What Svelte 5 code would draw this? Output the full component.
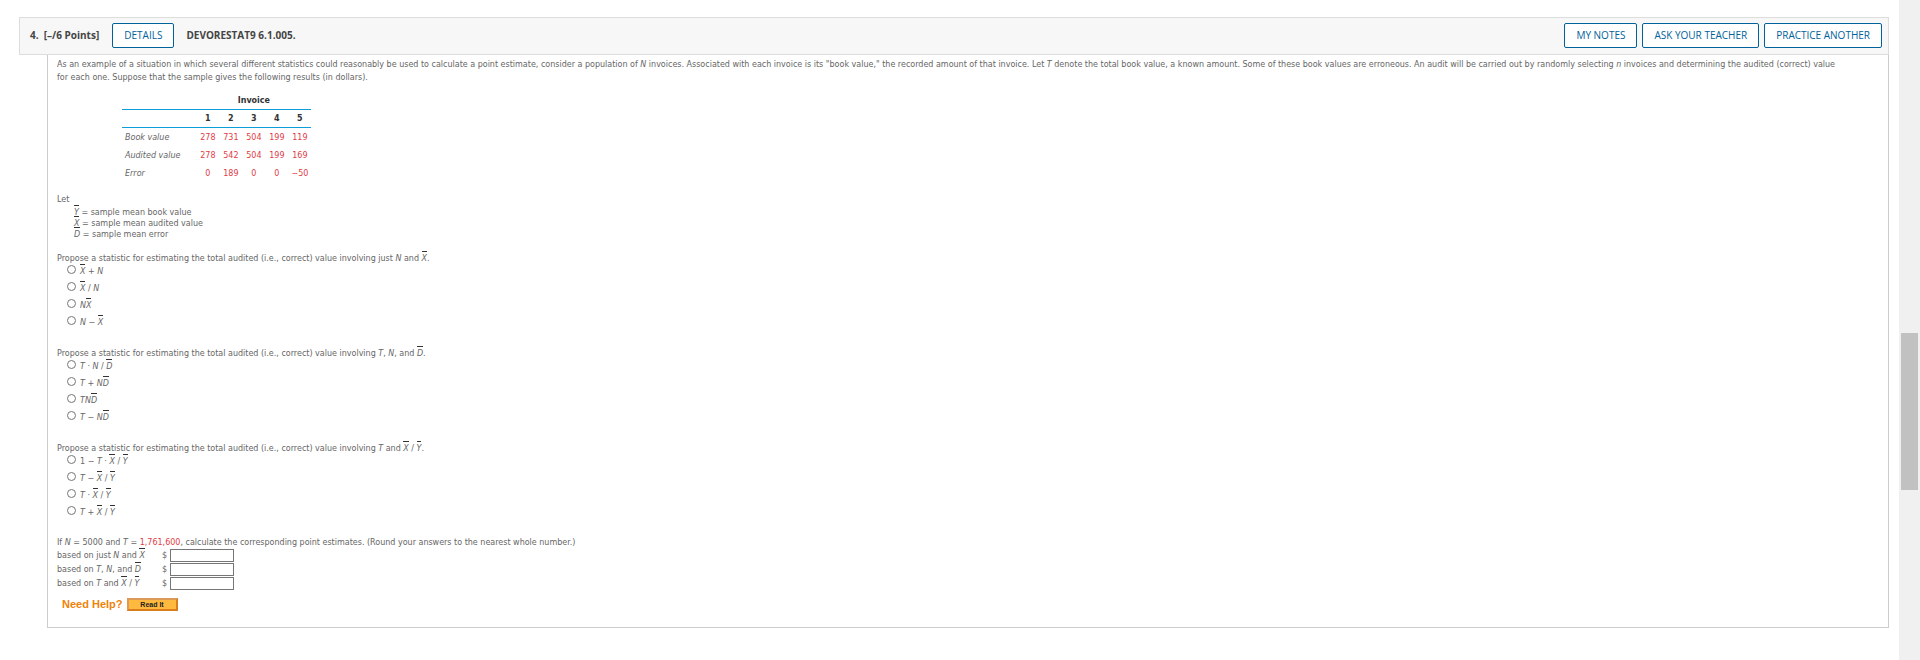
<script>
  const invoices = [1, 2, 3, 4, 5];

  const rows = [
    { label: "Book value", values: ["278", "731", "504", "199", "119"] },
    { label: "Audited value", values: ["278", "542", "504", "199", "169"] },
    { label: "Error", values: ["0", "189", "0", "0", "−50"] },
  ];

  const means = [
    { symbol: "^Y", text: "sample mean book value" },
    { symbol: "^X", text: "sample mean audited value" },
    { symbol: "^D", text: "sample mean error" },
  ];

  // In a formula, ^ marks the letter after it as a mean (drawn with a bar)
  const questions = [
    {
      name: "just-n-x",
      involving: "just N and ^X",
      options: ["^X + N", "^X / N", "N^X", "N − ^X"],
    },
    {
      name: "t-n-d",
      involving: "T, N, and ^D",
      options: ["T · N / ^D", "T + N^D", "TN^D", "T − N^D"],
    },
    {
      name: "t-x-y",
      involving: "T and ^X / ^Y",
      options: ["1 − T · ^X / ^Y", "T − ^X / ^Y", "T · ^X / ^Y", "T + ^X / ^Y"],
    },
  ];

  const estimates = [
    { id: "estimate-x", basis: "just N and ^X" },
    { id: "estimate-d", basis: "T, N, and ^D" },
    { id: "estimate-ratio", basis: "T and ^X / ^Y" },
  ];

  let selected = $state({});
  let answers = $state({});

  function parse(formula) {
    return formula.split(/(\^?[A-Z])/).filter(Boolean);
  }
</script>

{#snippet math(formula)}
  {#each parse(formula) as part}{#if part[0] === "^"}<i class="mean">{part[1]}</i
      >{:else if /[A-Z]/.test(part)}<i>{part}</i>{:else}{part}{/if}{/each}
{/snippet}

<div class="page">
  <main>
    <header>
      <h2>4.&nbsp; [–/6 Points]</h2>
      <button class="outline">DETAILS</button>
      <h2 class="code">DEVORESTAT9 6.1.005.</h2>
      <div class="actions">
        <button class="outline">MY NOTES</button>
        <button class="outline">ASK YOUR TEACHER</button>
        <button class="outline">PRACTICE ANOTHER</button>
      </div>
    </header>

    <section class="question">
      <p class="intro">
        As an example of a situation in which several different statistics could
        reasonably be used to calculate a point estimate, consider a population
        of <i>N</i> invoices. Associated with each invoice is its "book value,"
        the recorded amount of that invoice. Let <i>T</i> denote the total book
        value, a known amount. Some of these book values are erroneous. An audit
        will be carried out by randomly selecting <i>n</i> invoices and
        determining the audited (correct) value for each one. Suppose that the
        sample gives the following results (in dollars).
      </p>

      <table>
        <thead>
          <tr>
            <td></td>
            <th colspan="5" scope="colgroup">Invoice</th>
          </tr>
          <tr class="numbers">
            <td></td>
            {#each invoices as n}
              <th scope="col">{n}</th>
            {/each}
          </tr>
        </thead>
        <tbody>
          {#each rows as row}
            <tr>
              <th scope="row">{row.label}</th>
              {#each row.values as value}
                <td>{value}</td>
              {/each}
            </tr>
          {/each}
        </tbody>
      </table>

      <p>Let</p>
      <ul class="means">
        {#each means as mean}
          <li>{@render math(mean.symbol)} = {mean.text}</li>
        {/each}
      </ul>

      {#each questions as question}
        <fieldset>
          <legend>
            Propose a statistic for estimating the total audited (i.e., correct)
            value involving {@render math(question.involving)}.
          </legend>
          {#each question.options as option}
            <label class="option">
              <input
                type="radio"
                name={question.name}
                value={option}
                bind:group={selected[question.name]}
              />
              <span>{@render math(option)}</span>
            </label>
          {/each}
        </fieldset>
      {/each}

      <p>
        If <i>N</i> = 5000 and <i>T</i> = <span class="value">1,761,600</span>,
        calculate the corresponding point estimates. (Round your answers to the
        nearest whole number.)
      </p>
      <div class="estimates">
        {#each estimates as { id, basis }}
          <label for={id}>based on {@render math(basis)}</label>
          <span>$</span>
          <input {id} type="text" bind:value={answers[id]} />
        {/each}
      </div>

      <div class="help">
        <strong>Need Help?</strong>
        <button class="read">Read It</button>
      </div>
    </section>
  </main>

  <div class="scrollbar">
    <div class="thumb"></div>
  </div>
</div>

<style>
  :global(body) {
    margin: 0;
    background: #fff;
  }

  .page {
    display: flex;
    min-height: 100vh;
    font-family: Verdana, "DejaVu Sans", sans-serif;
    font-size: 8px;
    line-height: 13px;
    color: #666;
  }

  main {
    flex: 1;
    padding: 17px 10px 30px 19px;
  }

  header {
    display: flex;
    align-items: center;
    padding: 5px 6px 6px 10px;
    border: 1px solid #ddd;
    background: #f7f7f7;
    font-family: "Open Sans", sans-serif;
  }

  h2 {
    margin: 0 13px 0 0;
    font-size: 10px;
    font-weight: 700;
    color: #444;
  }

  .code {
    margin-left: 12px;
  }

  .actions {
    display: flex;
    gap: 5px;
    margin-left: auto;
  }

  .outline {
    height: 25px;
    padding: 0 11px 1px;
    border: 1px solid #00629b;
    border-radius: 2px;
    background: #fff;
    font-family: inherit;
    font-size: 10px;
    font-weight: 500;
    color: #00629b;
    cursor: pointer;
  }

  .question {
    margin-left: 28px;
    padding: 3px 9px 16px;
    border: 1px solid #ccc;
    border-top: 0;
  }

  p {
    margin: 0;
  }

  .intro {
    padding-right: 36px;
  }

  table {
    margin: 8px 0 11px 65px;
    border-collapse: collapse;
    text-align: center;
  }

  th,
  td {
    min-width: 17px;
    height: 17px;
    padding: 0 3px;
  }

  thead th {
    color: #333;
  }

  .numbers {
    border-top: 1px solid #0a9fd9;
    border-bottom: 1px solid #0a9fd9;
  }

  tbody th,
  tbody td {
    height: 18px;
  }

  tbody th {
    padding-right: 16px;
    font-style: italic;
    font-weight: 400;
    text-align: left;
  }

  tbody td,
  .value {
    color: #e03c46;
  }

  .mean {
    padding-top: 2px;
    border-top: 1px solid #333;
  }

  .means {
    margin: 1px 0 12px;
    padding: 0 0 0 17px;
    line-height: 11px;
    list-style: none;
  }

  fieldset {
    min-width: 0;
    margin: 0 0 14px;
    padding: 0;
    border: 0;
  }

  fieldset:last-of-type {
    margin-bottom: 13px;
  }

  legend {
    padding: 0;
  }

  .option {
    display: flex;
    align-items: baseline;
    gap: 4px;
    width: fit-content;
    height: 17px;
    margin-left: 10px;
  }

  .option input {
    width: 9px;
    height: 9px;
    margin: 0;
  }

  .estimates {
    display: grid;
    grid-template-columns: auto auto 64px;
    align-items: center;
    justify-content: start;
    row-gap: 1px;
  }

  .estimates span {
    margin: 0 3px 0 17px;
  }

  .estimates input {
    box-sizing: border-box;
    width: 100%;
    height: 13px;
    padding: 0 2px;
    border: 1px solid #767676;
    font: inherit;
  }

  .help {
    display: flex;
    align-items: center;
    gap: 4px;
    margin: 8px 0 0 5px;
  }

  .help strong {
    font-family: "Liberation Sans", Arial, sans-serif;
    font-size: 11px;
    color: #ee8208;
  }

  .read {
    width: 51px;
    height: 13px;
    padding: 0;
    border: 2px solid;
    border-color: #dc9a5a #d87f1c #d87f1c #dc9a5a;
    background: #ffb93f;
    font-family: "Liberation Sans", Arial, sans-serif;
    font-size: 7px;
    font-weight: 700;
    line-height: 9px;
    color: #222;
    cursor: pointer;
  }

  /* The thumb sits a little past half way down the track */
  .scrollbar {
    display: grid;
    grid-template-rows: 333fr 157fr 170fr;
    width: 17px;
    padding: 0 2px;
    background: #f0f0f0;
  }

  .thumb {
    grid-row: 2;
    background: #c1c1c1;
  }
</style>
